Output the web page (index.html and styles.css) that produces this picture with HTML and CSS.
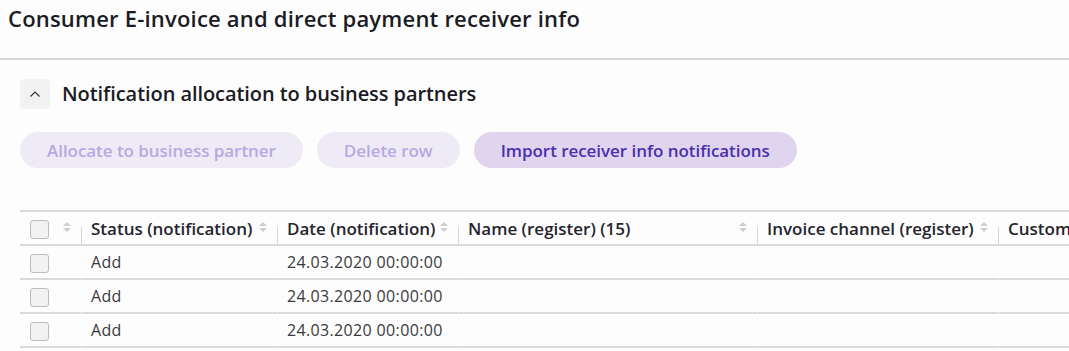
FILE: index.html
```html
<!DOCTYPE html>
<html lang="en">
<head>
    <meta charset="UTF-8">
    <title>Consumer E-invoice and direct payment receiver info</title>
    <link rel="stylesheet" href="styles.css">
</head>
<body>
    <header class="page-header">
        <h1>Consumer E-invoice and direct payment receiver info</h1>
    </header>

    <section class="panel">
        <div class="panel-head">
            <button class="collapse-btn" type="button" aria-label="Collapse">
                <svg width="12" height="8" viewBox="0 0 12 8"><path d="M1.5 6.5 L6 2 L10.5 6.5" fill="none" stroke="#333" stroke-width="1.2"/></svg>
            </button>
            <h2>Notification allocation to business partners</h2>
        </div>

        <div class="toolbar">
            <button class="btn" type="button" disabled>Allocate to business partner</button>
            <button class="btn" type="button" disabled>Delete row</button>
            <button class="btn btn-active" type="button">Import receiver info notifications</button>
        </div>

        <div class="grid-wrap">
            <table class="grid">
                <colgroup>
                    <col style="width: 61px">
                    <col style="width: 196px">
                    <col style="width: 181px">
                    <col style="width: 299px">
                    <col style="width: 241px">
                    <col style="width: 200px">
                </colgroup>
                <thead>
                    <tr>
                        <th class="check-col"><span class="check"></span><span class="sort"></span></th>
                        <th><span class="th-label">Status (notification)</span><span class="sort"></span></th>
                        <th><span class="th-label">Date (notification)</span><span class="sort"></span></th>
                        <th><span class="th-label">Name (register) (15)</span><span class="sort"></span></th>
                        <th><span class="th-label">Invoice channel (register)</span><span class="sort"></span></th>
                        <th><span class="th-label">Customer number</span><span class="sort"></span></th>
                    </tr>
                </thead>
                <tbody>
                    <tr>
                        <td class="check-col"><span class="check"></span></td>
                        <td>Add</td>
                        <td>24.03.2020 00:00:00</td>
                        <td></td>
                        <td></td>
                        <td></td>
                    </tr>
                    <tr>
                        <td class="check-col"><span class="check"></span></td>
                        <td>Add</td>
                        <td>24.03.2020 00:00:00</td>
                        <td></td>
                        <td></td>
                        <td></td>
                    </tr>
                    <tr>
                        <td class="check-col"><span class="check"></span></td>
                        <td>Add</td>
                        <td>24.03.2020 00:00:00</td>
                        <td></td>
                        <td></td>
                        <td></td>
                    </tr>
                </tbody>
            </table>
        </div>
    </section>
</body>
</html>
```

FILE: styles.css
```css
/* Base */
body {
    margin: 0;
    background: #fdfdfd;
    font-family: 'Open Sans', 'Noto Sans', sans-serif;
    color: #1d1d26;
    overflow: hidden;
}

.page-header {
    height: 58px;
    border-bottom: 2px solid #d6d6d6;
    box-sizing: content-box;
}

.page-header h1 {
    margin: 0;
    padding: 4px 0 0 8px;
    font-size: 22px;
    line-height: 28px;
    letter-spacing: 0.2px;
    font-weight: 600;
    color: #1b1b24;
}

.panel {
    padding: 19px 0 0 20px;
}

.panel-head {
    display: flex;
    align-items: center;
    gap: 12px;
}

.collapse-btn {
    width: 30px;
    height: 30px;
    border: none;
    border-radius: 4px;
    background: #f2f2f2;
    display: flex;
    align-items: center;
    justify-content: center;
    padding: 0;
}

.panel-head h2 {
    margin: 0;
    font-size: 20px;
    font-weight: 600;
    letter-spacing: -0.07px;
    line-height: 30px;
    color: #1b1b24;
}

/* Buttons */
.toolbar {
    display: flex;
    gap: 14px;
    margin-top: 23px;
}

.btn {
    height: 36px;
    padding: 0 27px;
    border: none;
    border-radius: 18px;
    background: #efebf6;
    color: #b6a9e2;
    font-family: inherit;
    font-size: 17px;
    letter-spacing: -0.05px;
    font-weight: 600;
}

.btn-active {
    background: #e0d5ee;
    color: #4a2fb0;
}

/* Table */
.grid-wrap {
    margin-top: 42px;
    overflow: hidden;
}

.grid {
    border-collapse: separate;
    border-spacing: 0;
    table-layout: fixed;
    width: 1178px;
    border-top: 2px solid #dadada;
}

.grid th,
.grid td {
    height: 32px;
    padding: 0 0 0 10px;
    border-bottom: 2px solid #dadada;
    text-align: left;
    white-space: nowrap;
    overflow: hidden;
}

.grid th {
    font-size: 17px;
    font-weight: 600;
    color: #25252e;
    position: relative;
    padding-right: 14px;
}

.grid td {
    font-size: 16px;
    letter-spacing: 0.35px;
    color: #3a3a3a;
    padding-left: 9px;
}

.grid td + td {
    border-left: 1px solid #fdfdfd;
}

.grid th + th::before {
    content: "";
    position: absolute;
    left: 0;
    bottom: 0;
    height: 17px;
    border-left: 1px solid #d6d6d6;
}

.th-label {
    display: inline-block;
    vertical-align: middle;
    margin-top: -3px;
}

.grid .check-col {
    padding-left: 10px;
}

.check {
    display: inline-block;
    width: 17px;
    height: 17px;
    border: 1.5px solid #bcbcbc;
    border-radius: 3px;
    background: #f2f2f2;
    vertical-align: middle;
}

/* Sort arrows */
.sort {
    position: absolute;
    right: 10px;
    top: 50%;
    margin-top: -6px;
    width: 8px;
    height: 10px;
}

.sort::before,
.sort::after {
    content: "";
    position: absolute;
    left: 0;
    border-left: 4px solid transparent;
    border-right: 4px solid transparent;
}

.sort::before {
    top: 0;
    border-bottom: 4px solid #cfcfcf;
}

.sort::after {
    bottom: 0;
    border-top: 4px solid #cfcfcf;
}
```
